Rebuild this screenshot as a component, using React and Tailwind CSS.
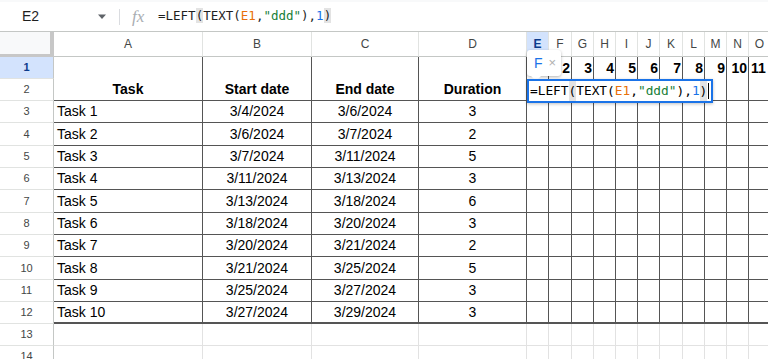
const letters = ['A', 'B', 'C', 'D', 'E', 'F', 'G', 'H', 'I', 'J', 'K', 'L', 'M', 'N', 'O'];
const widths = [
  'w-[149px]', 'w-[109px]', 'w-[107px]', 'w-[108px]',
  'w-[22px]', 'w-[23px]', 'w-[22px]', 'w-[22px]', 'w-[22px]', 'w-[22px]',
  'w-[23px]', 'w-[22px]', 'w-[22px]', 'w-[22px]', 'w-[22px]',
];
const heights = [
  'h-[22px]', 'h-[22px]', 'h-[22px]', 'h-[23px]', 'h-[22px]', 'h-[22px]', 'h-[23px]',
  'h-[22px]', 'h-[22px]', 'h-[23px]', 'h-[22px]', 'h-[22px]', 'h-[22px]', 'h-[22px]',
];

const tasks = [
  ['Task 1', '3/4/2024', '3/6/2024', '3'],
  ['Task 2', '3/6/2024', '3/7/2024', '2'],
  ['Task 3', '3/7/2024', '3/11/2024', '5'],
  ['Task 4', '3/11/2024', '3/13/2024', '3'],
  ['Task 5', '3/13/2024', '3/18/2024', '6'],
  ['Task 6', '3/18/2024', '3/20/2024', '3'],
  ['Task 7', '3/20/2024', '3/21/2024', '2'],
  ['Task 8', '3/21/2024', '3/25/2024', '5'],
  ['Task 9', '3/25/2024', '3/27/2024', '3'],
  ['Task 10', '3/27/2024', '3/29/2024', '3'],
];

const Formula = () => (
  <>
    =LEFT<span className="bg-[#e3e3e3]">(</span>TEXT(<span className="text-[#e8710a]">E1</span>,
    <span className="text-[#188038]">"ddd"</span>),<span className="text-[#1a73e8]">1</span>
    <span className="bg-[#e3e3e3]">)</span>
  </>
);

function cellBorder(r) {
  if (r <= 12) {
    let b = 'border-r border-r-[#555]';
    if (r === 12) b += ' border-b-2 border-b-[#555]';
    else if (r >= 2) b += ' border-b border-b-[#555]';
    return b;
  }
  return 'border-r border-b border-[#e2e2e2]';
}

function cellContent(r, c) {
  // E1 sits under the autocomplete popup
  if (r === 1 && c === 4) return null;
  if (r === 1 && c === 14) {
    return <span className="pl-[2px] font-bold whitespace-nowrap">11</span>;
  }
  if (r === 1 && c >= 4) {
    return <span className="w-full text-right pr-[1px] font-bold whitespace-nowrap">{c - 3}</span>;
  }
  if (r === 2 && c < 4) {
    const h = ['Task', 'Start date', 'End date', 'Duration'][c];
    return <span className="w-full text-center font-bold">{h}</span>;
  }
  if (r >= 3 && r <= 12 && c < 4) {
    const v = tasks[r - 3][c];
    return <span className={c === 0 ? 'w-full pl-[3px]' : 'w-full text-center'}>{v}</span>;
  }
  return null;
}

export default function App() {
  const rows = Array.from({ length: 14 }, (_, i) => i + 1);
  return (
    <div className="w-[768px] h-[359px] overflow-hidden bg-white text-[#1f1f1f] font-['Liberation_Sans',Arial,sans-serif]">
      <div className="h-[2px] bg-[#f8f9fa]" />
      <div className="flex items-center h-[30px] border-b border-[#c4c7c5]">
        <div className="w-[97px] pl-[22px] text-[14px]">E2</div>
        <svg width="10" height="6" viewBox="0 0 10 6" className="mt-[1px]">
          <path d="M1 0.5 L9 0.5 L5 5 Z" fill="#5f6368" />
        </svg>
        <div className="ml-[12px] w-px h-[16px] bg-[#dadce0]" />
        <span className="ml-[12px] w-[26px] text-[17px] italic text-[#a9adb2] font-['Liberation_Serif',serif]">fx</span>
        <span className="text-[12.5px] font-['DejaVu_Sans_Mono',monospace] text-[#1f1f1f] whitespace-pre">
          <Formula />
        </span>
      </div>

      <div className="relative">
        <div className="flex h-[25px]">
          <div className="w-[54px] shrink-0 bg-[#f8f9fa] border-r-4 border-b-[3px] border-[#c7c7c7]" />
          {letters.map((l, c) => (
            <div
              key={l}
              className={`${widths[c]} shrink-0 flex items-center justify-center border-r border-r-[#e1e3e1] border-b border-b-[#c4c7c5] text-[12px] ${
                c === 4 ? 'bg-[#d3e3fd] text-[#0b3b8c] font-bold' : 'text-[#444746]'
              }`}
            >
              {l}
            </div>
          ))}
        </div>

        {rows.map((r, i) => (
          <div key={r} className={`flex ${heights[i]}`}>
            <div
              className={`w-[54px] shrink-0 flex items-center justify-center border-r border-r-[#c4c7c5] border-b border-b-[#e1e3e1] text-[11px] ${
                r === 1 ? 'bg-[#d3e3fd] text-[#0b3b8c] font-bold' : 'text-[#444746]'
              }`}
            >
              {r}
            </div>
            {letters.map((l, c) => (
              <div key={l} className={`${widths[c]} shrink-0 flex items-center text-[14px] text-black ${cellBorder(r)}`}>
                {cellContent(r, c)}
              </div>
            ))}
          </div>
        ))}

        <div className="absolute left-[527px] top-[18px] w-[34px] h-[26px] bg-white rounded-[3px] shadow-[0_1px_3px_rgba(0,0,0,0.3)] flex items-center gap-[6px] pl-[7px]">
          <span className="text-[14px] text-[#1a73e8]">F</span>
          <span className="text-[13px] text-[#b0b0b0]">×</span>
          <div className="absolute left-[4px] -bottom-[5px] w-0 h-0 border-l-[5px] border-l-transparent border-r-[5px] border-r-transparent border-t-[5px] border-t-white" />
        </div>

        <div className="absolute left-[527px] top-[47px] w-[186px] h-[24px] bg-white border-2 border-[#1a73e8] flex items-center pl-[1px] text-[12.8px] font-['DejaVu_Sans_Mono',monospace] text-black whitespace-pre shadow-[0_1px_3px_rgba(0,0,0,0.25)]">
          <Formula />
          <span className="ml-[1px] w-px h-[16px] bg-black" />
        </div>
      </div>
    </div>
  );
}
